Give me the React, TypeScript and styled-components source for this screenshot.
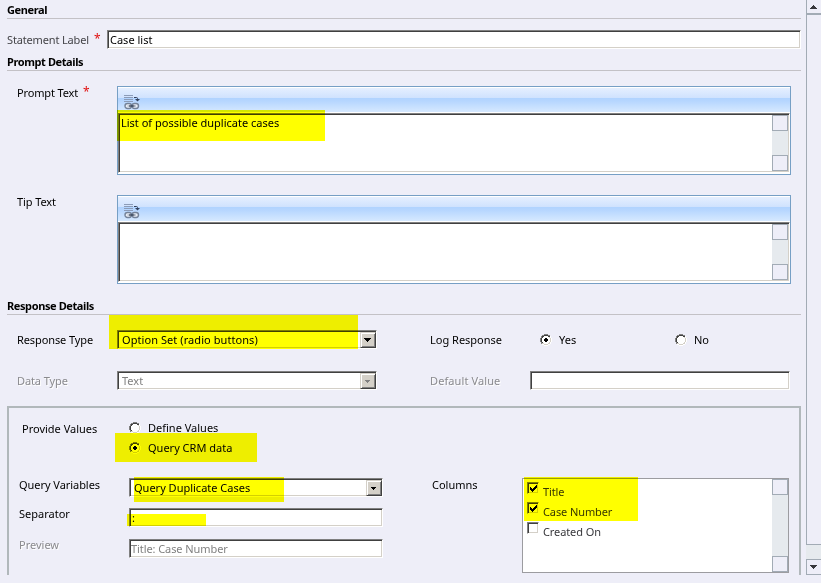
import React from "react";
import styled, { createGlobalStyle, css } from "styled-components";

const Global = createGlobalStyle`
  * { box-sizing: border-box; }
  html, body { margin: 0; padding: 0; background: #eeeef8; overflow: hidden; }
  body { font: 11px/15px "Noto Sans", sans-serif; color: #000; }
`;

const sunken = css`
  border: 1px solid;
  border-color: #808080 #fff #fff #808080;
  box-shadow: inset 1px 1px 0 #404040, inset -1px -1px 0 #d4d0c8;
`;

const Page = styled.div`
  position: relative;
  display: flex;
  width: 821px;
  height: 583px;
  overflow: hidden;
  background: #eeeef8;
`;

const Form = styled.main`
  display: flex;
  flex-direction: column;
  width: 806px;
  padding: 0 5px 0 7px;
`;

const SectionTitle = styled.h2<{ $height: number; $track?: number }>`
  display: flex;
  align-items: flex-end;
  flex: none;
  height: ${p => p.$height}px;
  margin: 0;
  padding-bottom: 1px;
  border-bottom: 1px solid #c3c1c6;
  font-size: 11px;
  line-height: 15px;
  font-weight: 700;
  letter-spacing: ${p => p.$track ?? -0.4}px;
`;

const FieldRow = styled.div<{ $gap?: number; $indent?: number }>`
  display: flex;
  align-items: flex-start;
  flex: none;
  margin-top: ${p => p.$gap ?? 0}px;
  padding-left: ${p => p.$indent ?? 0}px;
`;

const Label = styled.label<{ $width: number; $top?: number; $tone?: "dim" | "off"; $track?: number }>`
  flex: none;
  width: ${p => p.$width}px;
  margin-top: ${p => p.$top ?? 2}px;
  white-space: pre;
  letter-spacing: ${p => p.$track ?? 0}px;
  color: ${p => (p.$tone === "off" ? "#8a8a8e" : p.$tone === "dim" ? "#444448" : "#000")};
  text-shadow: ${p => (p.$tone === "off" ? "1px 1px 0 #fff" : "none")};
`;

const SideLabel = styled(Label)`
  margin-left: 53px;
`;

const Required = styled.span`
  display: inline-block;
  height: 10px;
  margin-left: 5px;
  color: #e01010;
  font-size: 12px;
  line-height: 10px;
  vertical-align: 1px;
`;

const TextField = styled.div<{ $width: number; $off?: boolean; $pad?: number; $track?: number }>`
  ${sunken}
  flex: none;
  width: ${p => p.$width}px;
  height: 19px;
  padding: 1px 0 0 ${p => p.$pad ?? 2}px;
  background-color: #fff;
  white-space: pre;
  letter-spacing: ${p => p.$track ?? 0}px;
  color: ${p => (p.$off ? "#808080" : "#000")};
`;

const SelectBox = styled(TextField)`
  display: flex;
  justify-content: space-between;
`;

const DropButton = styled.span`
  display: flex;
  align-items: center;
  width: 16px;
  height: 16px;
  padding-left: 3px;
  background: #d4d0c8;
  border: 1px solid;
  border-color: #d4d0c8 #404040 #404040 #d4d0c8;
  box-shadow: inset 1px 1px 0 #fff, inset -1px -1px 0 #808080;
`;

const Editor = styled.div`
  display: flex;
  flex-direction: column;
  width: 674px;
  height: 89px;
  border: 1px solid #769fc5;
  background: #fff;
`;

const EditorBar = styled.div`
  height: 24px;
  margin: 1px 0;
  padding: 6px 0 0 6px;
  background: linear-gradient(#e5efff 0, #cfe2fe 10px, #b0d3ff 10px, #b6d6ff 13px, #d6e9ff 100%);
`;

const EditorArea = styled.div`
  ${sunken}
  display: flex;
  justify-content: space-between;
  height: 60px;
  padding: 1px 1px 1px 2px;
`;

const Scroller = styled.div`
  display: flex;
  flex-direction: column;
  justify-content: space-between;
  width: 16px;
  background: #e6eaee;
`;

const ScrollButton = styled.span`
  height: 16px;
  border: 1px solid #a2abb5;
  background: #eeeef8;
`;

const ValuesPanel = styled.section`
  flex: none;
  height: 169px;
  margin-top: 16px;
  padding: 12px 0 0 10px;
  border: 2px solid #b1b8bb;
  border-bottom: 0;
`;

const PanelColumns = styled.div`
  display: flex;
  align-items: flex-start;
  margin-top: 23px;
`;

const PanelFields = styled.div`
  width: 413px;
`;

const RadioGroup = styled.div`
  display: flex;
  flex-direction: column;
  gap: 5px;
`;

const RadioOption = styled.div<{ $width?: number; $top?: number }>`
  display: flex;
  gap: 7px;
  height: 15px;
  width: ${p => (p.$width ? p.$width + "px" : "auto")};
  margin-top: ${p => p.$top ?? 0}px;
`;

const RadioMark = styled.svg`
  flex: none;
  width: 12px;
  height: 12px;
  margin-top: 2px;
`;

const ColumnList = styled.div`
  display: flex;
  justify-content: space-between;
  width: 267px;
  height: 95px;
  border: 1px solid #9c9ca0;
  background: #fff;
`;

const ColumnItems = styled.div`
  padding: 3px 0 0 4px;
`;

const ColumnItem = styled.div`
  display: flex;
  gap: 4px;
  height: 20px;
  color: #38383c;
`;

const ColumnName = styled.span`
  padding-top: 2px;
  letter-spacing: -0.1px;
`;

const CheckBox = styled.span`
  ${sunken}
  flex: none;
  display: flex;
  width: 12px;
  height: 12px;
  padding: 2px 0 0 2px;
`;

const PageScroll = styled.aside`
  display: flex;
  flex-direction: column;
  justify-content: space-between;
  width: 15px;
  height: 575px;
  background: #e6eaee;
`;

const PageScrollTop = styled.div``;

const PageArrow = styled.div<{ $height: number; $last?: boolean }>`
  display: flex;
  align-items: center;
  height: ${p => p.$height}px;
  padding-left: 3px;
  border: solid #a2abb5;
  border-width: ${p => (p.$last ? 1 : 0)}px 0 1px 1px;
  background: #eeeef8;
`;

const PageThumb = styled.div`
  height: 531px;
  border: solid #a2abb5;
  border-width: 1px 0 1px 1px;
  background: #eeeef8;
`;

const Highlight = styled.div<{ $x: number; $y: number; $w: number; $h: number }>`
  position: absolute;
  left: ${p => p.$x}px;
  top: ${p => p.$y}px;
  width: ${p => p.$w}px;
  height: ${p => p.$h}px;
  background: #ff0;
  mix-blend-mode: multiply;
  pointer-events: none;
`;

const marks = [
  { x: 117, y: 110, w: 208, h: 31 },
  { x: 109, y: 315, w: 249, h: 34 },
  { x: 115, y: 433, w: 142, h: 29 },
  { x: 134, y: 477, w: 150, h: 25 },
  { x: 127, y: 514, w: 79, h: 12 },
  { x: 524, y: 477, w: 114, h: 44 },
];

const columns = [
  { name: "Title", checked: true },
  { name: "Case Number", checked: true },
  { name: "Created On", checked: false },
];

const arrowShapes = {
  up: "M3 0h1v1h1v1h1v1h1v1H0V3h1V2h1V1h1z",
  down: "M0 0h7v1H6v1H5v1H4v1H3V3H2V2H1V1H0z",
  small: "M1 1h5v1H5v1H4v1H3V3H2V2H1z",
};

const Arrow = ({ kind, color = "#000" }: { kind: keyof typeof arrowShapes; color?: string }) => (
  <svg width="7" height="4" viewBox="0 0 7 4" shapeRendering="crispEdges" fill={color}>
    <path d={arrowShapes[kind]} />
  </svg>
);

const Radio = ({ on }: { on?: boolean }) => (
  <RadioMark viewBox="0 0 12 12" shapeRendering="crispEdges">
    <path d="M4 2h4v1h1v1h1v4h-1v1h-1v1H4V9H3V8H2V4h1V3h1z" fill="#fff" />
    <path d="M4 0h4v1H4zM2 1h2v1H2zM8 1h2v1H8zM1 2h1v2H1zM0 4h1v4H0zM1 8h1v2H1z" fill="#808080" />
    <path d="M4 1h4v1H4zM2 2h2v1H2zM8 2h2v1H8zM2 3h1v1H2zM1 4h1v4H1zM2 8h1v1H2z" fill="#404040" />
    <path d="M9 3h1v1H9zM10 4h1v4h-1zM9 8h1v1H9zM2 9h2v1H2zM8 9h2v1H8zM4 10h4v1H4z" fill="#d4d0c8" />
    <path d="M10 2h1v2h-1zM11 4h1v4h-1zM10 8h1v2h-1zM2 10h2v1H2zM8 10h2v1H8zM4 11h4v1H4z" fill="#fff" />
    {on && <path d="M5 4h2v1h1v2H7v1H5V7H4V5h1z" fill="#000" />}
  </RadioMark>
);

const Check = () => (
  <svg width="7" height="7" viewBox="0 0 7 7" shapeRendering="crispEdges">
    <path d="M0 2h1v1h1v1h1V3h1V2h1V1h1V0h1v3H6v1H5v1H4v1H3v1H2V6H1V5H0z" fill="#000" />
  </svg>
);

const LinkIcon = () => (
  <svg width="16" height="16" viewBox="0 0 16 16" fill="none">
    <path d="M0 1.500h9M0 3.500h9M0 5.500h9M0 7.500h9" stroke="#8c9cb8" shapeRendering="crispEdges" />
    <path d="M10 3.500h2.500q1 0 1 1v1.500" stroke="#34425f" />
    <path d="M11 5h5l-2.500 2.500z" fill="#34425f" />
    <rect x="1" y="9.500" width="6.500" height="5" rx="2.400" stroke="#74839a" strokeWidth="1.400" fill="#e8edf5" />
    <rect x="8" y="9.500" width="6.500" height="5" rx="2.400" stroke="#74839a" strokeWidth="1.400" fill="#e8edf5" />
    <path d="M3.500 12h1.500M10.500 12H12" stroke="#9aa6b8" />
    <path d="M5 12h5.500" stroke="#2f3b50" strokeWidth="1.300" />
  </svg>
);

const ListScroller = () => (
  <Scroller>
    <ScrollButton />
    <ScrollButton />
  </Scroller>
);

const RichText = ({ value }: { value?: string }) => (
  <Editor>
    <EditorBar>
      <LinkIcon />
    </EditorBar>
    <EditorArea>
      <span>{value}</span>
      <ListScroller />
    </EditorArea>
  </Editor>
);

interface SelectProps {
  value: string;
  width: number;
  off?: boolean;
  small?: boolean;
  track?: number;
}

const Select = ({ value, width, off, small, track }: SelectProps) => (
  <SelectBox $width={width} $off={off} $pad={4} $track={track}>
    {value}
    <DropButton>
      <Arrow kind={small ? "small" : "down"} color={off ? "#808080" : "#000"} />
    </DropButton>
  </SelectBox>
);

export default function App() {
  return (
    <Page>
      <Global />
      <Form>
        <SectionTitle $height={19}>General</SectionTitle>
        <FieldRow $gap={11}>
          <Label $width={100} $tone="dim" $track={-0.15}>
            Statement Label<Required>*</Required>
          </Label>
          <TextField $width={694}>Case list</TextField>
        </FieldRow>

        <SectionTitle $height={22}>Prompt Details</SectionTitle>
        <FieldRow $gap={15} $indent={10}>
          <Label $width={100} $top={-1} $track={-0.15}>
            Prompt Text<Required>*</Required>
          </Label>
          <RichText value="List of possible duplicate cases" />
        </FieldRow>
        <FieldRow $gap={20} $indent={10}>
          <Label $width={100} $top={-1} $track={-0.1}>Tip Text</Label>
          <RichText />
        </FieldRow>

        <SectionTitle $height={31}>Response Details</SectionTitle>
        <FieldRow $gap={15} $indent={10}>
          <Label $width={100} $track={-0.1}>Response Type</Label>
          <Select value="Option Set (radio buttons)" width={260} track={0.07} />
          <SideLabel $width={110}>Log Response</SideLabel>
          <RadioOption $width={135} $top={2}><Radio on />Yes</RadioOption>
          <RadioOption $top={2}><Radio />No</RadioOption>
        </FieldRow>
        <FieldRow $gap={22} $indent={10}>
          <Label $width={100} $tone="off" $track={-0.1}>Data Type</Label>
          <Select value="Text" width={260} off small />
          <SideLabel $width={100} $tone="off" $track={0.1}>Default Value</SideLabel>
          <TextField $width={260} />
        </FieldRow>

        <ValuesPanel>
          <FieldRow $indent={3}>
            <Label $width={107} $top={1}>Provide Values</Label>
            <RadioGroup>
              <RadioOption><Radio />Define Values</RadioOption>
              <RadioOption><Radio on />Query CRM data</RadioOption>
            </RadioGroup>
          </FieldRow>
          <PanelColumns>
            <PanelFields>
              <FieldRow>
                <Label $width={110} $top={-1} $track={-0.05}>Query Variables</Label>
                <Select value="Query Duplicate Cases" width={254} small />
              </FieldRow>
              <FieldRow $gap={11}>
                <Label $width={110} $top={-2}>Separator</Label>
                <TextField $width={254}>:</TextField>
              </FieldRow>
              <FieldRow $gap={12}>
                <Label $width={110} $top={-2} $tone="off">Preview</Label>
                <TextField $width={254} $off $pad={1} $track={-0.08}>Title: Case Number</TextField>
              </FieldRow>
            </PanelFields>
            <Label $width={90} $top={-1}>Columns</Label>
            <ColumnList>
              <ColumnItems>
                {columns.map(c => (
                  <ColumnItem key={c.name}>
                    <CheckBox>{c.checked && <Check />}</CheckBox>
                    <ColumnName>{c.name}</ColumnName>
                  </ColumnItem>
                ))}
              </ColumnItems>
              <ListScroller />
            </ColumnList>
          </PanelColumns>
        </ValuesPanel>
      </Form>
      <PageScroll>
        <PageScrollTop>
          <PageArrow $height={14}><Arrow kind="up" color="#38383c" /></PageArrow>
          <PageThumb />
        </PageScrollTop>
        <PageArrow $height={16} $last><Arrow kind="down" color="#38383c" /></PageArrow>
      </PageScroll>
      {marks.map(m => (
        <Highlight key={m.y + "-" + m.x} $x={m.x} $y={m.y} $w={m.w} $h={m.h} />
      ))}
    </Page>
  );
}
